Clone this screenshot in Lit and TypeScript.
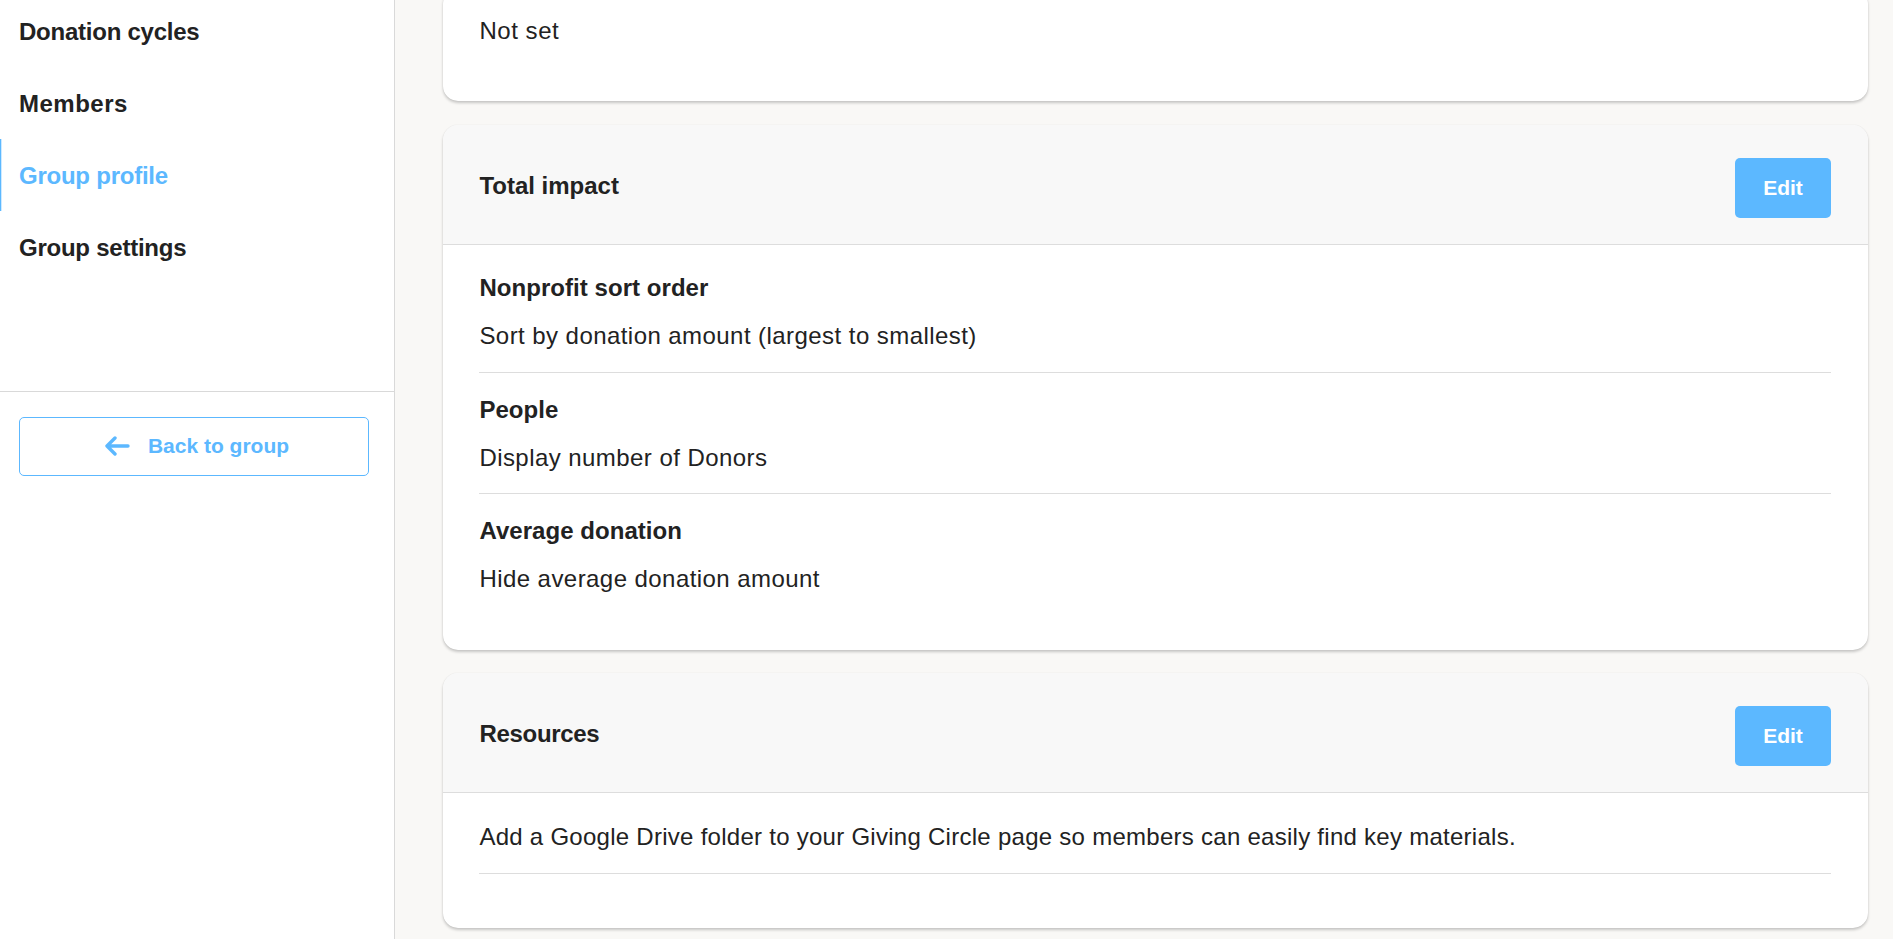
import { LitElement, html, css } from "lit";
import { customElement } from "lit/decorators.js";

@customElement("app-root")
export class AppRoot extends LitElement {
  static styles = css`
    :host { display: block; height: 939px; overflow: hidden; background: #f9f8f6; color: #222; font-family: "Liberation Sans", Arial, sans-serif; }
    .layout { display: flex; height: 939px; }
    .side { width: 394px; flex: none; background: #fff; border-right: 1px solid #d9d9d9; box-sizing: content-box; }
    .nav { height: 396px; margin-top: -5px; border-bottom: 1px solid #d9d9d9; box-sizing: content-box; display: flex; flex-direction: column; }
    .item { height: 72px; flex: none; display: flex; align-items: center; padding: 1px 0 0 19px; font-size: 24px; font-weight: 700; letter-spacing: -.24px; box-sizing: border-box; }
    .item.wide { letter-spacing: .5px; }
    .item.active { color: #5cb8ff; box-shadow: inset 1.3px 0 0 #5cb8ff; }
    .back { margin: 24.5px 0 0 19px; width: 350px; height: 59.5px; box-sizing: border-box; border: 1.5px solid #5cb8ff; border-radius: 5px; display: flex; align-items: center; justify-content: center; gap: 18px; padding-left: 5px; color: #5cb8ff; font-size: 21px; font-weight: 700; }
    .back svg { width: 26px; height: 20px; display: block; }
    .main { flex: 1; padding: 0 25px 0 48px; display: flex; flex-direction: column; gap: 23px; margin-top: -11.5px; }
    .card { background: #fff; border-radius: 15px; box-shadow: 0 2px 3px rgba(0,0,0,.2), 0 0 1px rgba(0,0,0,.15); overflow: hidden; flex: none; }
    .first { margin-bottom: 1.5px; }
    .head { height: 120px; box-sizing: border-box; display: flex; align-items: center; justify-content: space-between; padding: 6px 37px 0 36.4px; background: #f8f8f8; border-bottom: 1px solid #ddd; font-size: 24px; font-weight: 700; }
    .title { margin-bottom: 4px; }
    .title.tight { letter-spacing: -.3px; }
    .edit { width: 96px; height: 60px; margin-top: 1px; background: #5cb8ff; border-radius: 5px; color: #fff; font-size: 21px; font-weight: 700; display: flex; align-items: center; justify-content: center; }
    .body { padding: 6px 37px 0 36.4px; }
    .row { padding: 22px 0 20.6px; border-bottom: 1px solid #ddd; }
    .row.last { border-bottom: none; padding-bottom: 56px; }
    .label { font-size: 24px; font-weight: 700; line-height: 30px; letter-spacing: .05px; }
    .val { font-size: 24px; line-height: 30px; margin-top: 18px; letter-spacing: .44px; }
    .simple { height: 112px; box-sizing: border-box; padding: 27px 37px 0 36.4px; line-height: 30px; font-size: 24px; letter-spacing: .55px; }
    .res { padding: 29px 37px 0 36.4px; height: 134.5px; box-sizing: border-box; }
    .res .txt { font-size: 24px; line-height: 30px; letter-spacing: .27px; padding-bottom: 20.5px; border-bottom: 1px solid #ddd; }
  `;
  render() {
    const row = (l: string, v: string, last = false) => html`<div class="row ${last ? "last" : ""}"><div class="label">${l}</div><div class="val">${v}</div></div>`;
    return html`<div class="layout">
      <aside class="side">
        <nav class="nav">
          <div class="item">Donation cycles</div>
          <div class="item wide">Members</div>
          <div class="item active">Group profile</div>
          <div class="item">Group settings</div>
        </nav>
        <div class="back">
          <svg viewBox="0 0 26 20" fill="none" stroke="currentColor" stroke-width="3.4" stroke-linecap="round" stroke-linejoin="round"><path d="M24 10H3M11 2 3 10l8 8"/></svg>
          <span>Back to group</span>
        </div>
      </aside>
      <main class="main">
        <section class="card first"><div class="simple">Not set</div></section>
        <section class="card">
          <div class="head"><span class="title">Total impact</span><span class="edit">Edit</span></div>
          <div class="body">
            ${row("Nonprofit sort order", "Sort by donation amount (largest to smallest)")}
            ${row("People", "Display number of Donors")}
            ${row("Average donation", "Hide average donation amount", true)}
          </div>
        </section>
        <section class="card">
          <div class="head"><span class="title tight">Resources</span><span class="edit">Edit</span></div>
          <div class="res"><div class="txt">Add a Google Drive folder to your Giving Circle page so members can easily find key materials.</div></div>
        </section>
      </main>
    </div>`;
  }
}
